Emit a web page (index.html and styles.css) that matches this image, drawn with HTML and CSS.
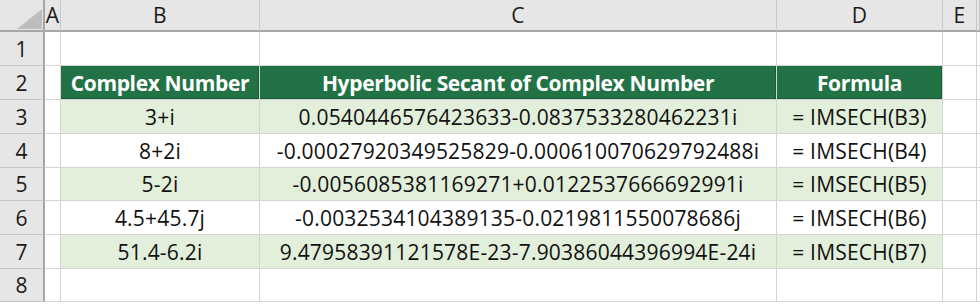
FILE: index.html
```html
<!DOCTYPE html>
<html>
<head>
<meta charset="utf-8">
<link rel="stylesheet" href="styles.css">
</head>
<body>
<div class="sheet">
  <div class="c hd corner"><svg class="tri" width="45" height="32" viewBox="0 0 45 32"><polygon points="17,29 42,29 42,9" fill="#bdbdbd"/></svg></div>
  <div class="c hd">A</div>
  <div class="c hd">B</div>
  <div class="c hd">C</div>
  <div class="c hd">D</div>
  <div class="c hd">E</div>
  <div class="c hd last"></div>

  <div class="c rh">1</div><div class="c"></div><div class="c"></div><div class="c"></div><div class="c"></div><div class="c"></div><div class="c last"></div>

  <div class="c rh">2</div><div class="c"></div>
  <div class="c g">Complex Number</div>
  <div class="c g">Hyperbolic Secant of Complex Number</div>
  <div class="c g">Formula</div>
  <div class="c"></div><div class="c last"></div>

  <div class="c rh">3</div><div class="c"></div>
  <div class="c lg">3+i</div>
  <div class="c lg">0.0540446576423633-0.0837533280462231i</div>
  <div class="c lg">= IMSECH(B3)</div>
  <div class="c"></div><div class="c last"></div>

  <div class="c rh">4</div><div class="c"></div>
  <div class="c">8+2i</div>
  <div class="c">-0.00027920349525829-0.000610070629792488i</div>
  <div class="c">= IMSECH(B4)</div>
  <div class="c"></div><div class="c last"></div>

  <div class="c rh">5</div><div class="c"></div>
  <div class="c lg">5-2i</div>
  <div class="c lg">-0.0056085381169271+0.0122537666692991i</div>
  <div class="c lg">= IMSECH(B5)</div>
  <div class="c"></div><div class="c last"></div>

  <div class="c rh">6</div><div class="c"></div>
  <div class="c">4.5+45.7j</div>
  <div class="c">-0.0032534104389135-0.0219811550078686j</div>
  <div class="c">= IMSECH(B6)</div>
  <div class="c"></div><div class="c last"></div>

  <div class="c rh">7</div><div class="c"></div>
  <div class="c lg">51.4-6.2i</div>
  <div class="c lg">9.47958391121578E-23-7.90386044396994E-24i</div>
  <div class="c lg">= IMSECH(B7)</div>
  <div class="c"></div><div class="c last"></div>

  <div class="c rh">8</div><div class="c"></div><div class="c"></div><div class="c"></div><div class="c"></div><div class="c"></div><div class="c last"></div>
</div>
</body>
</html>
```
FILE: styles.css
```css
html, body {
  margin: 0;
  padding: 0;
  background: #ffffff;
}
.sheet {
  display: grid;
  grid-template-columns: 45px 16px 199px 517px 166px 34px 3px;
  grid-template-rows: 32px 34px 34px 34px 34px 33px 34px 34px 33px;
  font-family: "Open Sans", "Liberation Sans", sans-serif;
  font-size: 21px;
  letter-spacing: 0.2px;
  color: #111111;
  width: 980px;
  height: 305px;
  overflow: hidden;
}
.c {
  box-sizing: border-box;
  border-right: 1px solid #d4d4d4;
  border-bottom: 1px solid #d4d4d4;
  display: flex;
  align-items: center;
  justify-content: center;
  white-space: nowrap;
  overflow: hidden;
  line-height: 1;
  padding-top: 1px;
}
.last {
  border-right: none;
}
.hd {
  background: #e6e6e6;
  border-bottom: 2px solid #a6a6a6;
  border-right: 1px solid #c8c8c8;
  color: #1a1a1a;
}
.corner {
  position: relative;
  border-right: 2px solid #a6a6a6;
}
.tri {
  position: absolute;
  left: 0;
  top: 0;
}
.rh {
  background: #e6e6e6;
  border-right: 2px solid #a6a6a6;
  border-bottom: 1px solid #c6c6c6;
  color: #1a1a1a;
}
.g {
  background: #217346;
  color: #ffffff;
  font-weight: 700;
  letter-spacing: -0.35px;
  box-shadow: inset -1px -1px 0 #185c37;
}
.lg {
  background: #e2efda;
}
```
